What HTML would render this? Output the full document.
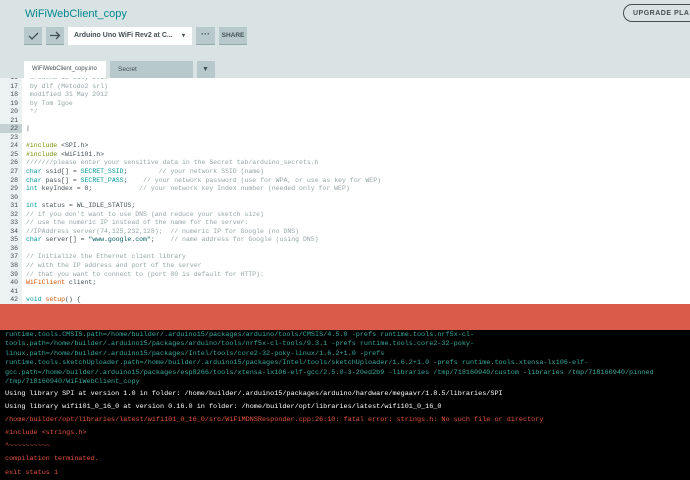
<!DOCTYPE html>
<html><head><style>
body{margin:0;width:690px;height:480px;overflow:hidden;background:#dae3e3;font-family:"Liberation Sans",sans-serif;position:relative}
.t{position:absolute;left:25px;top:8px;font-size:11px;color:#00878f}
.btn{position:absolute;top:27px;height:17px;background:#b7c9cb;border-bottom:1px solid #95a7a9}
.sel{position:absolute;left:68px;top:27px;width:124px;height:18px;background:#fff;font-size:7px;font-weight:bold;color:#434f54;line-height:18px;padding-left:6px;box-sizing:border-box}
.up{position:absolute;left:623px;top:4px;width:80px;height:18px;border:1.5px solid #434f54;border-radius:10px;font-size:7px;font-weight:bold;color:#434f54;line-height:18px;padding-left:9px;letter-spacing:.5px;box-sizing:border-box}
.tab{position:absolute;top:61px;height:17px;font-size:6.5px;line-height:17px;color:#434f54;box-sizing:border-box;padding-left:8px}
.ed{position:absolute;left:0;top:78px;width:690px;height:226px;background:#fff;overflow:hidden}
.gut{position:absolute;left:0;top:0;width:22px;height:226px;background:#ecf1f1}
pre{margin:0;font-family:"Liberation Mono",monospace}
.code{position:absolute;left:0;top:-4px;font-size:6.5px;line-height:8.55px;color:#434f54}
.n{display:inline-block;width:18px;text-align:right;color:#434f54;margin-right:8px}
.k{color:#00979c}.c{color:#95a5a6}.o{color:#d35400}.p{color:#728e00}.b{color:#005c5f}
.bar{position:absolute;left:0;top:304px;width:690px;height:26px;background:#da5b4a}
.con{position:absolute;left:0;top:330px;width:690px;height:150px;background:#000;overflow:hidden}
.con pre{position:absolute;left:5px;font-size:6.8px;line-height:9.4px;white-space:pre}
.g{color:#3aa99f}.w{color:#fff}.r{color:#e5533f}
</style></head><body>
<div class="t">WiFiWebClient_copy</div>
<div class="btn" style="left:24px;width:18px"><svg width="18" height="17"><path d="M5 9l3 3 6-6" stroke="#434f54" stroke-width="1.3" fill="none"/></svg></div>
<div class="btn" style="left:46px;width:18px"><svg width="18" height="17"><path d="M4 8.5h9M10 5l3.5 3.5L10 12" stroke="#434f54" stroke-width="1.3" fill="none"/></svg></div>
<div class="sel">Arduino Uno WiFi Rev2 at C...<span style="position:absolute;left:114px;font-size:6px">▾</span></div>
<div class="btn" style="left:196px;width:19px;font-size:9px;font-weight:bold;color:#434f54;text-align:center;line-height:14px">···</div>
<div class="btn" style="left:219px;width:28px;font-size:6.5px;font-weight:bold;color:#434f54;text-align:center;line-height:17px">SHARE</div>
<div class="up">UPGRADE PLAN</div>
<div class="tab" style="left:24px;width:82px;background:#fff;font-size:6px">WiFiWebClient_copy.ino</div>
<div class="tab" style="left:110px;width:83px;background:#b7c9cb">Secret</div>
<div class="tab" style="left:197px;width:18px;background:#b7c9cb;padding-left:5px;font-size:7px">▼</div>
<div class="ed"><div class="gut"></div>
<div style="position:absolute;left:0;top:46px;width:22px;height:9px;background:#c3d1d3"></div>
<pre class="code"><span class="n">16</span><span class="c"> created 13 July 2010</span>
<span class="n">17</span><span class="c"> by dlf (Metodo2 srl)</span>
<span class="n">18</span><span class="c"> modified 31 May 2012</span>
<span class="n">19</span><span class="c"> by Tom Igoe</span>
<span class="n">20</span><span class="c"> */</span>
<span class="n">21</span>
<span class="n">22</span>|
<span class="n">23</span>
<span class="n">24</span><span class="p">#include</span> &lt;SPI.h&gt;
<span class="n">25</span><span class="p">#include</span> &lt;WiFi101.h&gt;
<span class="n">26</span><span class="c">///////please enter your sensitive data in the Secret tab/arduino_secrets.h</span>
<span class="n">27</span><span class="k">char</span> ssid[] = <span class="k">SECRET_SSID</span>;        <span class="c">// your network SSID (name)</span>
<span class="n">28</span><span class="k">char</span> pass[] = <span class="k">SECRET_PASS</span>;    <span class="c">// your network password (use for WPA, or use as key for WEP)</span>
<span class="n">29</span><span class="k">int</span> keyIndex = 0;            <span class="c">// your network key Index number (needed only for WEP)</span>
<span class="n">30</span>
<span class="n">31</span><span class="k">int</span> status = WL_IDLE_STATUS;
<span class="n">32</span><span class="c">// if you don't want to use DNS (and reduce your sketch size)</span>
<span class="n">33</span><span class="c">// use the numeric IP instead of the name for the server:</span>
<span class="n">34</span><span class="c">//IPAddress server(74,125,232,128);  // numeric IP for Google (no DNS)</span>
<span class="n">35</span><span class="k">char</span> server[] = <span class="b">"www.google.com"</span>;    <span class="c">// name address for Google (using DNS)</span>
<span class="n">36</span>
<span class="n">37</span><span class="c">// Initialize the Ethernet client library</span>
<span class="n">38</span><span class="c">// with the IP address and port of the server</span>
<span class="n">39</span><span class="c">// that you want to connect to (port 80 is default for HTTP):</span>
<span class="n">40</span><span class="o">WiFiClient</span> client;
<span class="n">41</span>
<span class="n">42</span><span class="k">void</span> <span class="o">setup</span>() {</pre></div>
<div class="bar"></div>
<div class="con">
<pre class="g" style="top:1px">runtime.tools.CMSIS.path=/home/builder/.arduino15/packages/arduino/tools/CMSIS/4.5.0 -prefs runtime.tools.nrf5x-cl-
tools.path=/home/builder/.arduino15/packages/arduino/tools/nrf5x-cl-tools/9.3.1 -prefs runtime.tools.core2-32-poky-
linux.path=/home/builder/.arduino15/packages/Intel/tools/core2-32-poky-linux/1.6.2+1.0 -prefs
runtime.tools.sketchUploader.path=/home/builder/.arduino15/packages/Intel/tools/sketchUploader/1.6.2+1.0 -prefs runtime.tools.xtensa-lx106-elf-
gcc.path=/home/builder/.arduino15/packages/esp8266/tools/xtensa-lx106-elf-gcc/2.5.0-3-20ed2b9 -libraries /tmp/718160940/custom -libraries /tmp/718160940/pinned
/tmp/718160940/WiFiWebClient_copy</pre>
<pre class="w" style="top:60px">Using library SPI at version 1.0 in folder: /home/builder/.arduino15/packages/arduino/hardware/megaavr/1.8.5/libraries/SPI</pre>
<pre class="w" style="top:73px">Using library wifi101_0_16_0 at version 0.16.0 in folder: /home/builder/opt/libraries/latest/wifi101_0_16_0</pre>
<pre class="r" style="top:86px">/home/builder/opt/libraries/latest/wifi101_0_16_0/src/WiFiMDNSResponder.cpp:26:10: fatal error: strings.h: No such file or directory</pre>
<pre class="r" style="top:99px">#include &lt;strings.h&gt;</pre>
<pre class="r" style="top:112px">^~~~~~~~~~~</pre>
<pre class="r" style="top:125px">compilation terminated.</pre>
<pre class="r" style="top:139px">exit status 1</pre>
</div>
</body></html>
